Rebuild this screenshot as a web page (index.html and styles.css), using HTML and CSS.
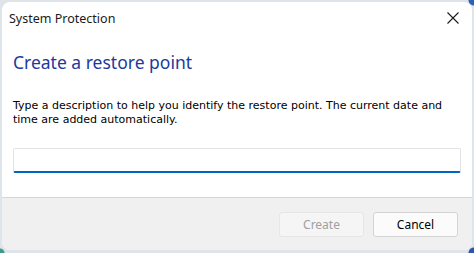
FILE: index.html
```html
<!DOCTYPE html>
<html lang="en">
<head>
    <meta charset="UTF-8">
    <title>System Protection</title>
    <link rel="stylesheet" href="styles.css">
</head>
<body>
    <div class="dialog">
        <div class="titlebar">
            <span class="title">System Protection</span>
            <button class="close" aria-label="Close">
                <svg width="12" height="12" viewBox="0 0 12 12">
                    <path d="M0.5 0.5 L11.5 11.5 M11.5 0.5 L0.5 11.5" stroke="#1a1a1a" stroke-width="1.1" fill="none"/>
                </svg>
            </button>
        </div>
        <div class="content">
            <h1>Create a restore point</h1>
            <p>Type a description to help you identify the restore point. The current date and time are added automatically.</p>
            <input type="text" class="desc">
        </div>
        <div class="footer">
            <button class="btn" disabled>Create</button>
            <button class="btn primary">Cancel</button>
        </div>
    </div>
</body>
</html>
```

FILE: styles.css
```css
html, body {
    margin: 0;
    height: 100%;
}
body {
    background:
        radial-gradient(circle at 100% 0, #2f5fb8 0, #2f5fb8 5px, transparent 6px),
        radial-gradient(circle at 0 100%, #3c9c8a 0, #3c9c8a 4px, transparent 5px),
        radial-gradient(circle at 100% 100%, #2a56b0 0, #2a56b0 5px, transparent 6px),
        #dfe3ea;
    padding: 2px 2px 3px 2px;
    box-sizing: border-box;
    font-family: "Noto Sans", "Open Sans", sans-serif;
}
.dialog {
    height: 100%;
    background: #fff;
    border-radius: 8px;
    overflow: hidden;
    display: flex;
    flex-direction: column;
}
.titlebar {
    height: 32px;
    display: flex;
    align-items: center;
    justify-content: space-between;
    padding-left: 7px;
}
.title {
    font-size: 12.5px;
    color: #1a1a1a;
}
.close {
    background: none;
    border: none;
    width: 38px;
    height: 32px;
    display: flex;
    align-items: center;
    justify-content: center;
    padding: 0;
}
.content {
    padding: 0 11px;
    flex: 1;
}
h1 {
    margin: 16px 0 0 0;
    font-size: 17.5px;
    font-weight: normal;
    color: #1c3a9c;
    line-height: 24px;
}
p {
    margin: 25px 0 0 0;
    font-family: "DejaVu Sans", Verdana, sans-serif;
    font-size: 11px;
    line-height: 14px;
    color: #000;
}
.desc {
    display: block;
    box-sizing: border-box;
    width: 100%;
    height: 25px;
    margin-top: 21px;
    border: 1px solid #e3e3e3;
    border-bottom: 2px solid #0067c0;
    border-radius: 2px;
    outline: none;
}
.footer {
    height: 52px;
    background: #f0f0f0;
    border-top: 1px solid #d6d6d6;
    display: flex;
    justify-content: flex-end;
    align-items: center;
    gap: 9px;
    padding-right: 14px;
}
.btn {
    width: 85px;
    height: 25px;
    font-family: "Noto Sans", "Open Sans", sans-serif;
    font-size: 12px;
    background: #fbfbfb;
    color: #000;
    border: 1px solid #d4d4d4;
    border-radius: 3px;
}
.btn:disabled {
    background: #f5f5f5;
    color: #a0a0a0;
    border-color: #e6e6e6;
}
```
